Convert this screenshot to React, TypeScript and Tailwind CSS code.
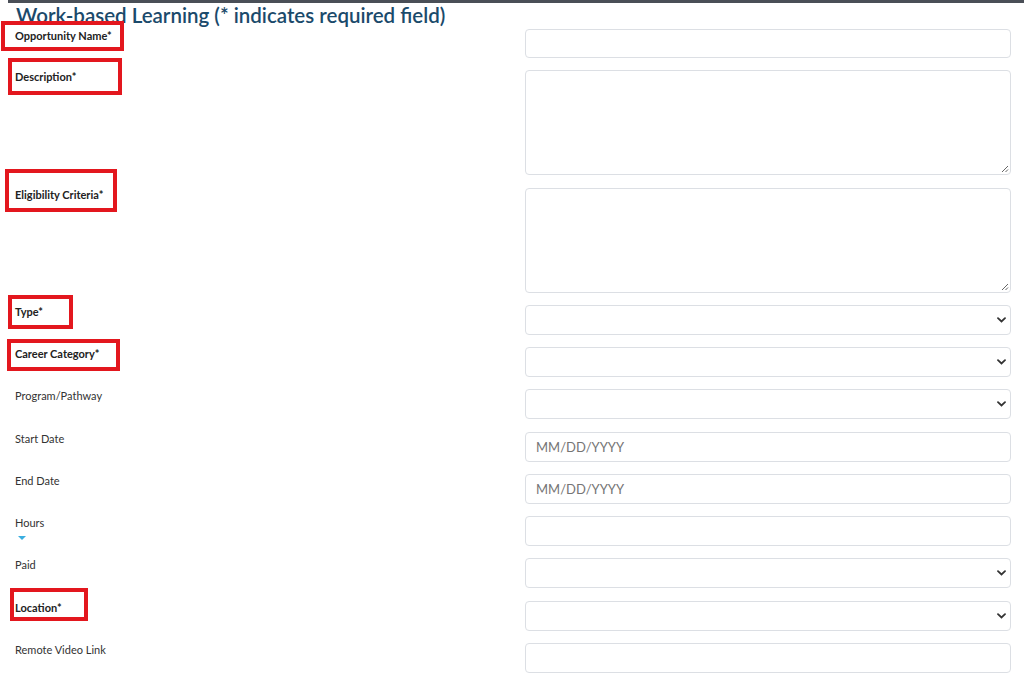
import { ReactNode } from "react";

type Field = {
  label: string;
  required?: boolean;
  kind: "input" | "textarea" | "select" | "date";
  box?: string; // red annotation box drawn round the label
  hint?: boolean;
};

const fields: Field[] = [
  { label: "Opportunity Name", required: true, kind: "input", box: "-left-[14px] -top-[8.5px] w-[123px] h-[30px]" },
  { label: "Description", required: true, kind: "textarea", box: "-left-[7px] -top-[12.5px] w-[114px] h-[37px]" },
  { label: "Eligibility Criteria", required: true, kind: "textarea", box: "-left-[10px] -top-[18.5px] w-[112px] h-[43px]" },
  { label: "Type", required: true, kind: "select", box: "-left-[7px] -top-[9.5px] w-[65px] h-[34px]" },
  { label: "Career Category", required: true, kind: "select", box: "-left-[8px] -top-[8.5px] w-[113px] h-[32px]" },
  { label: "Program/Pathway", kind: "select" },
  { label: "Start Date", kind: "date" },
  { label: "End Date", kind: "date" },
  { label: "Hours", kind: "input", hint: true },
  { label: "Paid", kind: "select" },
  { label: "Location", required: true, kind: "select", box: "-left-[5px] -top-[12.5px] w-[78px] h-[33px]" },
  { label: "Remote Video Link", kind: "input" },
];

function Chevron() {
  return (
    <svg width="9" height="6" viewBox="0 0 9 6" className="pointer-events-none absolute right-[5px] top-1/2 -translate-y-1/2">
      <path d="M1 1.2 L4.5 4.5 L8 1.2" fill="none" stroke="#333" strokeWidth="1.8" strokeLinecap="round" />
    </svg>
  );
}

function ResizeGrip() {
  return (
    <svg width="8" height="8" viewBox="0 0 8 8" className="pointer-events-none absolute bottom-[2px] right-[2px]">
      <path d="M7 1 L1 7 M7 4.5 L4.5 7" stroke="#666" strokeWidth="1" />
    </svg>
  );
}

function Control({ kind, first }: { kind: Field["kind"]; first: boolean }): ReactNode {
  const base =
    "w-full rounded-[4px] border border-[#dcdfe4] bg-white text-[13px] text-[#333] outline-none";
  if (kind === "textarea") {
    return (
      <div className="relative h-[105px]">
        <textarea className={`${base} h-full resize-none px-[10px] py-[6px]`} />
        <ResizeGrip />
      </div>
    );
  }
  if (kind === "select") {
    return (
      <div className="relative h-[30px]">
        <select className={`${base} h-full appearance-none px-[10px]`}>
          <option value=""></option>
        </select>
        <Chevron />
      </div>
    );
  }
  return (
    <input
      className={`${base} ${first ? "h-[29px]" : "h-[30px]"} px-[10px] placeholder:text-[#757575]`}
      placeholder={kind === "date" ? "MM/DD/YYYY" : ""}
    />
  );
}

export default function App() {
  return (
    <div className="relative min-h-[684px] w-[1024px] overflow-hidden bg-white font-['Lato','Noto_Sans',sans-serif]">
      {/* dark header edge */}
      <div className="relative z-10 ml-[8px] h-[3px] bg-[#4a4f57]" />

      <h1 className="mt-0 pl-[16px] text-[20.5px] font-semibold leading-[24px] text-[#1b4a6b]">
        Work-based Learning (* indicates required field)
      </h1>

      <div className="mt-[2px] flex flex-col gap-[12.25px] pl-[15px] pr-[13px]">
        {fields.map((f, i) => (
          <div key={f.label} className="flex items-start">
            <div className="w-[510px] text-[11px] leading-[13px]">
              <div className="relative inline-block align-top">
                <span className={f.required ? "font-bold text-[#222]" : "text-[#333]"}>
                  {f.label}
                  {f.required ? "*" : ""}
                </span>
                {f.box ? (
                  <span className={`absolute border-[4px] border-[#e3171e] ${f.box}`} />
                ) : null}
                {f.hint ? (
                  <span className="absolute left-[3px] top-[20px] h-0 w-0 border-x-[4px] border-t-[4px] border-x-transparent border-t-[#3aaee0]" />
                ) : null}
              </div>
            </div>
            <div className="flex-1">
              <Control kind={f.kind} first={i === 0} />
            </div>
          </div>
        ))}
      </div>
    </div>
  );
}
